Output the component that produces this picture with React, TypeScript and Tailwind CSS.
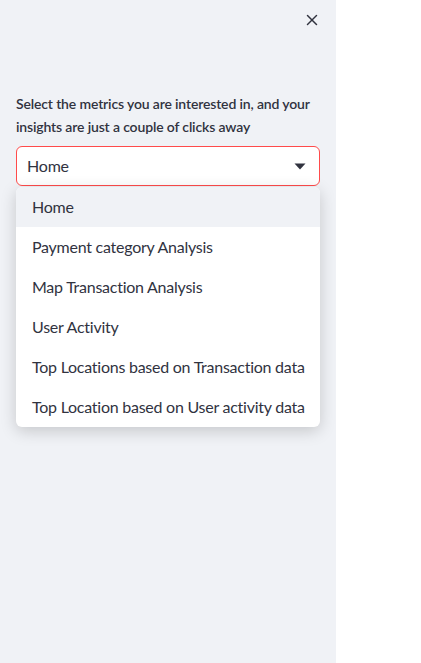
import { X } from 'lucide-react';

const options = [
  'Home',
  'Payment category Analysis',
  'Map Transaction Analysis',
  'User Activity',
  'Top Locations based on Transaction data',
  'Top Location based on User activity data',
];

export default function App() {
  return (
    <div className="flex h-[663px] w-full bg-white text-[#31333f] font-['Lato',sans-serif]">
      {/* Sidebar */}
      <aside className="w-[336px] h-full bg-[#f0f2f6] flex flex-col px-4">
        <div className="flex justify-end pt-[10px] -mr-[2px]">
          <button className="w-5 h-5 flex items-center justify-center text-[#31333f]">
            <X className="w-[18px] h-[18px]" strokeWidth={2} />
          </button>
        </div>

        <p className="mt-[62px] text-[14px] leading-[23px] font-semibold tracking-[-0.15px]">
          Select the metrics you are interested in, and your insights are just a couple of clicks away
        </p>

        <div className="relative mt-[8px]">
          <div className="h-10 bg-white border border-[#ff4b4b] rounded-[6px] flex items-center justify-between pl-[10px] pr-[13px]">
            <span className="text-[16px] tracking-[-0.2px]">Home</span>
            <svg width="12" height="7" viewBox="0 0 12 7">
              <path d="M0.5 0.5 L11.5 0.5 L6 6.5 Z" fill="#31333f" />
            </svg>
          </div>

          {/* Dropdown menu */}
          <ul className="absolute left-0 right-0 top-[41px] bg-white rounded-[6px] shadow-[0_4px_16px_rgba(0,0,0,0.18)] overflow-hidden">
            {options.map((opt, i) => (
              <li
                key={opt}
                className={`h-10 flex items-center px-4 text-[16px] tracking-[-0.25px] whitespace-nowrap ${i === 0 ? 'bg-[#f0f2f6]' : ''}`}
              >
                {opt}
              </li>
            ))}
          </ul>
        </div>
      </aside>
      <main className="flex-1" />
    </div>
  );
}
